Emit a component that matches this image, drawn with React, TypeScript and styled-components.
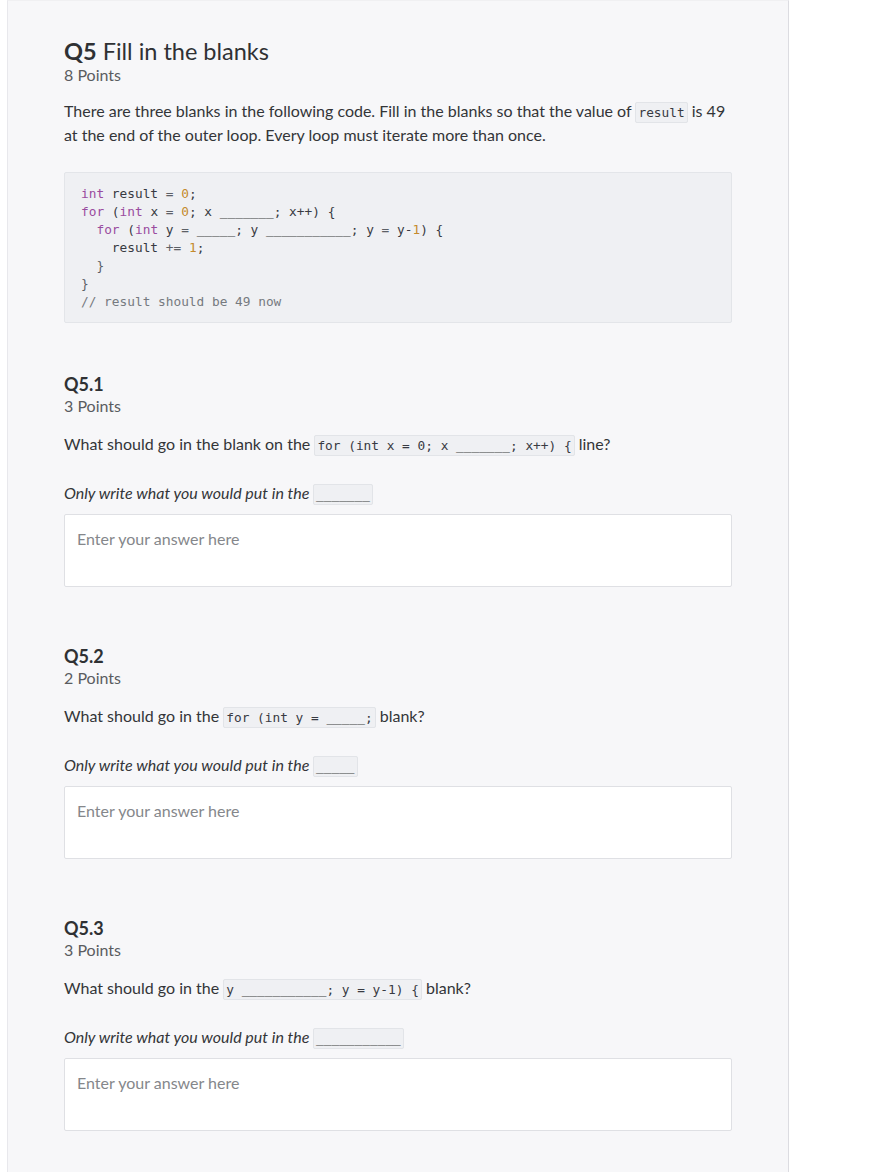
import React from "react";
import styled, { createGlobalStyle } from "styled-components";

const GlobalStyle = createGlobalStyle`
  body {
    margin: 0;
    background: #ffffff;
    font-family: Lato, "Open Sans", sans-serif;
    color: #333538;
  }
`;

const Page = styled.div`
  padding-left: 7px;
`;

const Panel = styled.div`
  width: 782px;
  min-height: 1172px;
  box-sizing: border-box;
  padding: 36px 56px 40px;
  background: #f7f7f9;
  border-left: 1px solid #e8e8ec;
  border-right: 1px solid #dcdce1;
  border-top: 1px solid #f0f0f2;
`;

const Title = styled.h2`
  margin: 0;
  font-size: 23.5px;
  line-height: 28px;
  font-weight: 400;
  color: #2f3134;

  b {
    font-weight: 700;
  }
`;

const SubTitle = styled.h3`
  margin: 0;
  font-size: 18px;
  line-height: 24px;
  font-weight: 700;
  color: #2f3134;
`;

const Points = styled.div`
  font-size: 16px;
  line-height: 20px;
  color: #5a5c60;
`;

const Text = styled.p<{ $gap?: number }>`
  margin: ${(p) => p.$gap ?? 16}px 0 0;
  font-size: 16px;
  line-height: 24px;
  color: #333538;
`;

const Hint = styled(Text)`
  font-style: italic;
`;

const Code = styled.code`
  font-family: "DejaVu Sans Mono", "Liberation Mono", monospace;
  font-size: 12.8px;
  line-height: 16px;
  padding: 2px 2px;
  background: #eff0f3;
  border: 1px solid #e2e4e8;
  border-radius: 2px;
  color: #383a42;
`;

const CodeBlock = styled.pre`
  margin: 25px 0 0;
  padding: 12px 16px 11px;
  background: #eff0f3;
  border: 1px solid #e3e5e9;
  border-radius: 2px;
  font-family: "DejaVu Sans Mono", "Liberation Mono", monospace;
  font-size: 12.8px;
  line-height: 18px;
  color: #383a42;
`;

const Kw = styled.span`
  color: #9a4c9f;
`;

const Num = styled.span`
  color: #c48a2c;
`;

const Op = styled.span`
  color: #5c6066;
`;

const Comment = styled.span`
  color: #767a80;
`;

const Section = styled.section`
  margin-top: 49px;

  & + & {
    margin-top: 57px;
  }
`;

const Answer = styled.textarea`
  display: block;
  box-sizing: border-box;
  width: 100%;
  height: 73px;
  margin-top: 9px;
  padding: 15px 12px;
  border: 1px solid #dfe0e4;
  border-radius: 2px;
  background: #ffffff;
  font-family: Lato, "Open Sans", sans-serif;
  font-size: 16px;
  line-height: 18px;
  resize: none;

  &::placeholder {
    color: #85878b;
  }
`;

interface IPartProps {
  num: string;
  points: number;
  question: React.ReactNode;
  blank: string;
}

const Part = ({ num, points, question, blank }: IPartProps) => (
  <Section>
    <SubTitle>{num}</SubTitle>
    <Points>{points} Points</Points>
    <Text>{question}</Text>
    <Hint $gap={25}>
      Only write what you would put in the <Code>{blank}</Code>
    </Hint>
    <Answer placeholder="Enter your answer here" />
  </Section>
);

const App = () => {
  return (
    <Page>
      <GlobalStyle />
      <Panel>
        <Title>
          <b>Q5</b> Fill in the blanks
        </Title>
        <Points>8 Points</Points>
        <Text $gap={14}>
          There are three blanks in the following code. Fill in the blanks so
          that the value of <Code>result</Code> is 49 at the end of the outer
          loop. Every loop must iterate more than once.
        </Text>
        <CodeBlock>
          <Kw>int</Kw> result <Op>=</Op> <Num>0</Num>;{"\n"}
          <Kw>for</Kw> (<Kw>int</Kw> x <Op>=</Op> <Num>0</Num>; x _______; x++) {"{"}
          {"\n"}
          {"  "}
          <Kw>for</Kw> (<Kw>int</Kw> y <Op>=</Op> _____; y ___________; y <Op>=</Op> y-
          <Num>1</Num>) {"{"}
          {"\n"}
          {"    "}result <Op>+=</Op> <Num>1</Num>;{"\n"}
          {"  "}
          <Op>{"}"}</Op>
          {"\n"}
          <Op>{"}"}</Op>
          {"\n"}
          <Comment>// result should be 49 now</Comment>
        </CodeBlock>

        <Part
          num="Q5.1"
          points={3}
          question={
            <>
              What should go in the blank on the{" "}
              <Code>for (int x = 0; x _______; x++) {"{"}</Code> line?
            </>
          }
          blank="_______"
        />
        <Part
          num="Q5.2"
          points={2}
          question={
            <>
              What should go in the <Code>for (int y = _____;</Code> blank?
            </>
          }
          blank="_____"
        />
        <Part
          num="Q5.3"
          points={3}
          question={
            <>
              What should go in the{" "}
              <Code>y ___________; y = y-1) {"{"}</Code> blank?
            </>
          }
          blank="___________"
        />
      </Panel>
    </Page>
  );
};

export default App;
